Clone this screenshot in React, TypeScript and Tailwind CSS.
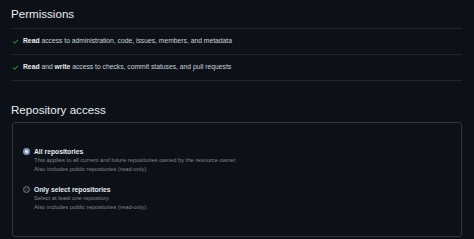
import React from 'react';

const font = { fontFamily: '"Liberation Sans", Arial, sans-serif' };

function Check() {
  return (
    <svg width="7" height="7" viewBox="0 0 16 16" className="shrink-0 text-[#3fb950]">
      <path
        fill="currentColor"
        d="M13.78 4.22a.75.75 0 0 1 0 1.06l-7.25 7.25a.75.75 0 0 1-1.06 0L2.22 9.28a.75.75 0 0 1 1.06-1.06L6 10.94l6.72-6.72a.75.75 0 0 1 1.06 0Z"
      />
    </svg>
  );
}

function Radio({ checked }: { checked: boolean }) {
  return checked ? (
    <span className="mt-[1px] w-[7px] h-[7px] rounded-full bg-[#8197bd] flex items-center justify-center shrink-0">
      <span className="w-[3px] h-[3px] rounded-full bg-[#e6edf3]" />
    </span>
  ) : (
    <span className="mt-[1px] w-[7px] h-[7px] rounded-full border-[1.5px] border-[#6e7681] bg-[#21262d] shrink-0" />
  );
}

const permissions = [
  { parts: [['Read', true], [' access to administration, code, issues, members, and metadata', false]] },
  {
    parts: [
      ['Read', true],
      [' and ', false],
      ['write', true],
      [' access to checks, commit statuses, and pull requests', false],
    ],
  },
] as { parts: [string, boolean][] }[];

const options = [
  {
    title: 'All repositories',
    lines: [
      'This applies to all current and future repositories owned by the resource owner.',
      'Also includes public repositories (read-only).',
    ],
    checked: true,
  },
  {
    title: 'Only select repositories',
    lines: ['Select at least one repository.', 'Also includes public repositories (read-only).'],
    checked: false,
  },
];

export default function App() {
  return (
    <div className="w-[474px] h-[239px] bg-[#0d1117] overflow-hidden pl-[11px] pr-[12px]" style={font}>
      <h2 className="pt-[6px] h-[28px] text-[11.6px] leading-[16px] text-[#e6edf3] font-normal">Permissions</h2>
      <ul>
        {permissions.map((p, i) => (
          <li
            key={i}
            className="h-[26px] border-t border-[#21262d] flex items-center gap-[4px] pl-[1px] text-[6.75px] text-[#c9d1d9]"
          >
            <Check />
            <span>
              {p.parts.map(([t, b], j) => (
                <span key={j} className={b ? 'font-bold text-[#e6edf3]' : ''}>
                  {t}
                </span>
              ))}
            </span>
          </li>
        ))}
      </ul>
      <div className="border-t border-[#21262d]" />

      <h2 className="pt-[21px] h-[41px] text-[11.6px] leading-[16px] text-[#e6edf3] font-normal">Repository access</h2>
      <div className="ml-[1px] h-[115px] border border-[#30363d] rounded-[3px] pt-[24px] pl-[10px] flex flex-col gap-[11px]">
        {options.map((o) => (
          <div key={o.title} className="flex gap-[4px]">
            <Radio checked={o.checked} />
            <div>
              <div className="text-[6.75px] leading-[9px] font-bold text-[#e6edf3]">{o.title}</div>
              {o.lines.map((l) => (
                <div key={l} className="text-[5.8px] leading-[9px] text-[#7d8590]">
                  {l}
                </div>
              ))}
            </div>
          </div>
        ))}
      </div>
    </div>
  );
}
